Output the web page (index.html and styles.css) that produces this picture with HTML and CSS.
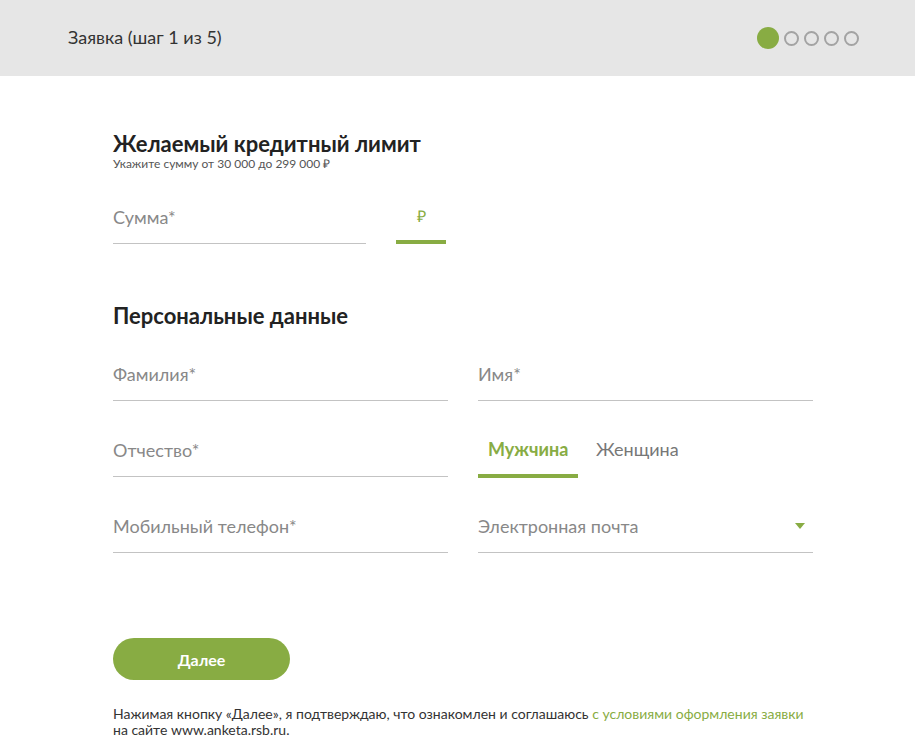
FILE: index.html
```html
<!DOCTYPE html>
<html lang="ru">
<head>
<meta charset="utf-8">
<title>Заявка</title>
<link rel="stylesheet" href="styles.css">
</head>
<body>
<header class="header">
  <div class="header-title">Заявка (шаг 1 из 5)</div>
  <div class="steps">
    <span class="step step-active"></span>
    <span class="step"></span>
    <span class="step"></span>
    <span class="step"></span>
    <span class="step"></span>
  </div>
</header>
<main class="main">
  <section class="section-limit">
    <h1 class="title">Желаемый кредитный лимит</h1>
    <p class="subtitle">Укажите сумму от 30 000 до 299 000 ₽</p>
    <div class="sum-row">
      <div class="field field-sum"><span class="label">Сумма*</span></div>
      <div class="currency-tab">₽</div>
    </div>
  </section>
  <section class="section-personal">
    <h2 class="title2">Персональные данные</h2>
    <div class="grid">
      <div class="field"><span class="label">Фамилия*</span></div>
      <div class="field"><span class="label">Имя*</span></div>
      <div class="field"><span class="label">Отчество*</span></div>
      <div class="gender">
        <div class="gender-tab gender-active">Мужчина</div>
        <div class="gender-tab">Женщина</div>
      </div>
      <div class="field"><span class="label">Мобильный телефон*</span></div>
      <div class="field field-select"><span class="label">Электронная почта</span><span class="caret"></span></div>
    </div>
  </section>
  <button class="btn" type="button">Далее</button>
  <p class="note">Нажимая кнопку «Далее», я подтверждаю, что ознакомлен и соглашаюсь <a class="link" href="#">с условиями оформления заявки</a><br>на сайте www.anketa.rsb.ru.</p>
</main>
</body>
</html>
```
FILE: styles.css
```css
* { box-sizing: border-box; }
html, body { margin: 0; padding: 0; background: #fff; }
body { font-family: Lato, "Open Sans", sans-serif; color: #222; }

.header {
  height: 76px;
  background: #e6e6e6;
  display: flex;
  align-items: center;
  justify-content: space-between;
  padding: 0 56px 0 68px;
}
.header-title { font-size: 18px; line-height: 22px; color: #333; margin-top: -2px; }
.steps { display: flex; align-items: center; gap: 5px; }
.step {
  width: 15px; height: 15px;
  border: 2px solid #a3a3a3;
  border-radius: 50%;
}
.step-active {
  width: 22px; height: 22px;
  border: none;
  background: #88ac43;
}

.main { padding: 55px 0 0 113px; width: 813px; }
.title { margin: 0; font-size: 22px; line-height: 26px; font-weight: 700; color: #222; }
.subtitle { margin: 0; font-size: 12px; line-height: 14px; color: #555; }

.sum-row { display: flex; gap: 30px; margin-top: 27px; }
.field {
  height: 46px;
  border-bottom: 1px solid #c3c3c3;
  display: flex;
  align-items: flex-end;
  padding-bottom: 15px;
}
.field-sum { width: 253px; }
.label { font-size: 18px; line-height: 22px; color: #888; }
.currency-tab {
  width: 50px;
  height: 46px;
  border-bottom: 4px solid #88ac43;
  display: flex;
  align-items: flex-end;
  justify-content: center;
  padding-bottom: 14px;
  color: #88ac43;
  font-size: 16px;
  line-height: 20px;
}

.section-personal { margin-top: 59px; }
.title2 { margin: 0; font-size: 22px; line-height: 26px; font-weight: 700; color: #222; }
.grid {
  margin-top: 26px;
  display: grid;
  grid-template-columns: 335px 335px;
  column-gap: 30px;
  row-gap: 30px;
}
.gender { display: flex; height: 46px; align-items: flex-end; }
.gender-tab {
  padding: 0 10px 14px;
  font-size: 18px;
  line-height: 22px;
  color: #777;
  border-bottom: 4px solid transparent;
  margin-bottom: -1px;
  height: 47px;
  display: flex;
  align-items: flex-end;
}
.gender-active { width: 100px; color: #88ac43; font-weight: 700; border-bottom-color: #88ac43; }
.gender-tab + .gender-tab { padding-left: 18px; }
.field-select { justify-content: space-between; padding-right: 8px; }
.caret {
  width: 0; height: 0;
  border-left: 5px solid transparent;
  border-right: 5px solid transparent;
  border-top: 6px solid #88ac43;
  margin-bottom: 8px;
}

.btn {
  margin-top: 85px;
  width: 177px;
  height: 42px;
  border: none;
  border-radius: 21px;
  background: #88ac43;
  color: #fff;
  font-family: Lato, sans-serif;
  font-size: 16px;
  font-weight: 700;
  display: block;
  cursor: pointer;
}
.note { margin: 26px 0 0; font-size: 14px; line-height: 16px; color: #333; }
.link { color: #88ac43; text-decoration: none; }
```
